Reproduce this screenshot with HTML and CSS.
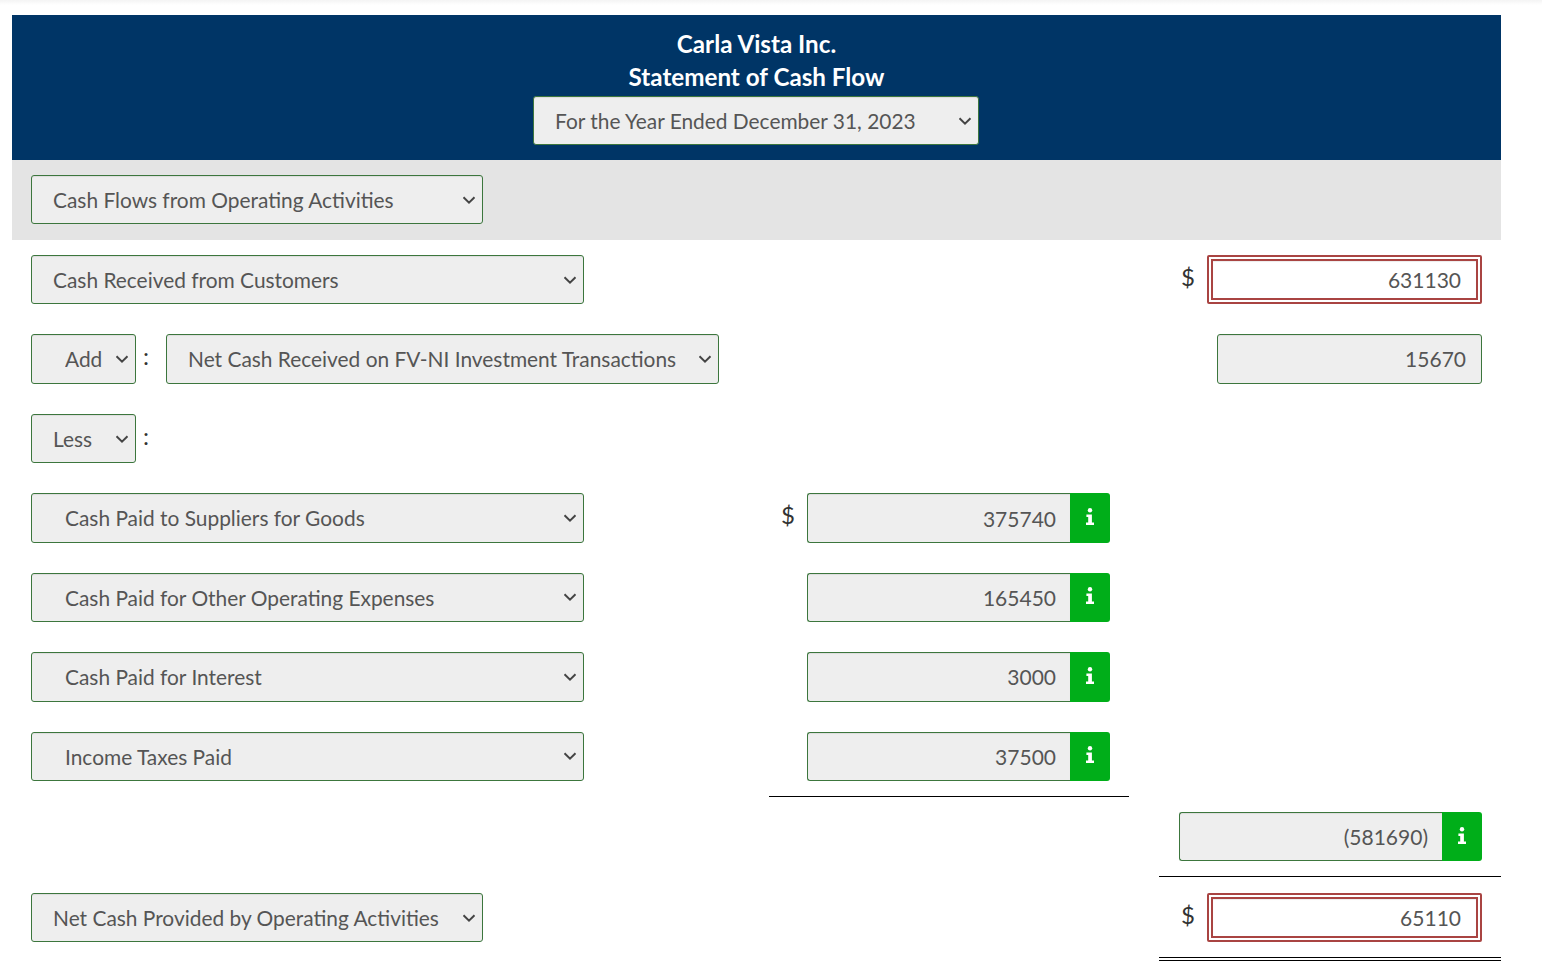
FILE: index.html
```html
<!DOCTYPE html>
<html lang="en">
<head>
<meta charset="utf-8">
<title>Statement of Cash Flow</title>
<link rel="stylesheet" href="styles.css">
</head>
<body>
<main class="sheet">
  <header class="head">
    <div class="title">Carla Vista Inc.</div>
    <div class="title">Statement of Cash Flow</div>
    <select class="sel sel-date"><option>For the Year Ended December 31, 2023</option></select>
  </header>

  <section class="band">
    <select class="sel sel-md"><option>Cash Flows from Operating Activities</option></select>
  </section>

  <div class="row">
    <div class="c-left"><select class="sel sel-lg"><option>Cash Received from Customers</option></select></div>
    <div class="c-mid"></div>
    <div class="c-right"><span class="cur">$</span>
      <div class="err"><input class="num num-err" readonly value="631130"></div></div>
  </div>

  <div class="row">
    <div class="c-left">
      <select class="sel sel-xs in-add"><option>Add</option></select><span class="colon">:</span>
      <select class="sel sel-net"><option>Net Cash Received on FV-NI Investment Transactions</option></select>
    </div>
    <div class="c-mid"></div>
    <div class="c-right"><input class="num num-plain" readonly value="15670"></div>
  </div>

  <div class="row">
    <div class="c-left"><select class="sel sel-xs"><option>Less</option></select><span class="colon">:</span></div>
    <div class="c-mid"></div>
    <div class="c-right"></div>
  </div>

  <div class="row">
    <div class="c-left"><select class="sel sel-lg in-wide"><option>Cash Paid to Suppliers for Goods</option></select></div>
    <div class="c-mid"><span class="cur">$</span>
      <div class="group g-mid"><input class="num" readonly value="375740"><span class="addon"><svg class="ico" viewBox="0 0 8 17"><circle cx="4" cy="2.2" r="2.2"/><path d="M.4 6.4H5.9V14.4H8V17H0V14.4H2.2V9H.4Z"/></svg></span></div></div>
    <div class="c-right"></div>
  </div>

  <div class="row">
    <div class="c-left"><select class="sel sel-lg in-wide"><option>Cash Paid for Other Operating Expenses</option></select></div>
    <div class="c-mid">
      <div class="group g-mid"><input class="num" readonly value="165450"><span class="addon"><svg class="ico" viewBox="0 0 8 17"><circle cx="4" cy="2.2" r="2.2"/><path d="M.4 6.4H5.9V14.4H8V17H0V14.4H2.2V9H.4Z"/></svg></span></div></div>
    <div class="c-right"></div>
  </div>

  <div class="row">
    <div class="c-left"><select class="sel sel-lg in-wide"><option>Cash Paid for Interest</option></select></div>
    <div class="c-mid">
      <div class="group g-mid"><input class="num" readonly value="3000"><span class="addon"><svg class="ico" viewBox="0 0 8 17"><circle cx="4" cy="2.2" r="2.2"/><path d="M.4 6.4H5.9V14.4H8V17H0V14.4H2.2V9H.4Z"/></svg></span></div></div>
    <div class="c-right"></div>
  </div>

  <div class="row row-ruled">
    <div class="c-left"><select class="sel sel-lg in-wide"><option>Income Taxes Paid</option></select></div>
    <div class="c-mid rule">
      <div class="group g-mid"><input class="num" readonly value="37500"><span class="addon"><svg class="ico" viewBox="0 0 8 17"><circle cx="4" cy="2.2" r="2.2"/><path d="M.4 6.4H5.9V14.4H8V17H0V14.4H2.2V9H.4Z"/></svg></span></div></div>
    <div class="c-right"></div>
  </div>

  <div class="row row-sub">
    <div class="c-left"></div>
    <div class="c-mid"></div>
    <div class="c-right rule">
      <div class="group g-right"><input class="num" readonly value="(581690)"><span class="addon"><svg class="ico" viewBox="0 0 8 17"><circle cx="4" cy="2.2" r="2.2"/><path d="M.4 6.4H5.9V14.4H8V17H0V14.4H2.2V9H.4Z"/></svg></span></div></div>
  </div>

  <div class="row row-total">
    <div class="c-left"><select class="sel sel-md"><option>Net Cash Provided by Operating Activities</option></select></div>
    <div class="c-mid"></div>
    <div class="c-right rule-double"><span class="cur">$</span>
      <div class="err"><input class="num num-err" readonly value="65110"></div></div>
  </div>
</main>
</body>
</html>
```

FILE: styles.css
```css
* { box-sizing: border-box; }

html, body { height: 100%; }

body {
  margin: 0;
  padding: 15px 41px 0 12px;
  background: linear-gradient(#f4f4f4, #fff 5px);
  font-family: Lato, "Liberation Sans", sans-serif;
  font-size: 21px;
  color: #555;
  overflow: hidden;
}

.head {
  height: 145px;
  padding-top: 12px;
  background: #003566;
  text-align: center;
}

.title {
  height: 33px;
  line-height: 33px;
  font-size: 24.2px;
  font-weight: 700;
  color: #fff;
}

.band {
  height: 80px;
  padding: 15px 19px;
  background: #e4e4e4;
}

.sel {
  appearance: none;
  height: 49.45px;
  padding: 0 30px 0.5px 21px;
  border: 1px solid #3c763d;
  border-radius: 3px;
  box-shadow: inset 0 1px 1px rgba(0, 0, 0, .075);
  background-color: #eee;
  background-image: url("data:image/svg+xml,%3Csvg xmlns='http://www.w3.org/2000/svg' viewBox='0 0 14 8'%3E%3Cpath d='M1.5 1.2L7 6.6l5.5-5.4' fill='none' stroke='%23444' stroke-width='2'/%3E%3C/svg%3E");
  background-repeat: no-repeat;
  background-position: right 6px center;
  background-size: 14px 8px;
  font: inherit;
  font-size: 20.9px;
  color: #555;
}

.sel-date { width: 446px; height: 49px; display: block; margin: 3px 0 0 521px; padding-bottom: 0; }
.sel-md { width: 452px; }
.sel-lg { width: 553px; }
.sel-xs { width: 105px; }
.sel-net { width: 553px; }
.in-wide, .in-add { padding-left: 33px; }

.row {
  display: grid;
  grid-template-columns: 757px 360px 30px 342px;
  height: 79.45px;
}

.row-ruled { height: 80.3px; }
.row-sub { height: 80px; }
.row-total { height: 84px; padding-top: 1px; }

.c-left {
  display: flex;
  align-items: flex-start;
  padding: 15px 0 0 19px;
}

.c-mid {
  grid-column: 2;
  display: flex;
  justify-content: flex-end;
  align-items: flex-start;
  padding: 15px 19px 0 0;
}

.c-right {
  grid-column: 4;
  display: flex;
  justify-content: flex-end;
  align-items: flex-start;
  padding: 15px 19px 0 0;
}

.colon { width: 30px; padding: 8px 0 0 7px; font-size: 24px; line-height: 28px; color: #333; }

.cur {
  margin-right: 12px;
  padding-top: 7px;
  font-size: 24px;
  line-height: 30px;
  color: #333;
}

.num {
  flex: 1;
  min-width: 0;
  height: 49.45px;
  padding: 0 14px 0 0;
  border: 1px solid #3c763d;
  border-right: 0;
  border-radius: 3px 0 0 3px;
  box-shadow: inset 0 1px 1px rgba(0, 0, 0, .075);
  background: #eee;
  font: inherit;
  color: #555;
  text-align: right;
  outline: none;
}

.num-plain {
  flex: none;
  width: 265px;
  padding: 0 15px 1px 0;
  border-right: 1px solid #3c763d;
  border-radius: 3px;
}

.err {
  width: 275px;
  height: 49.45px;
  padding: 2px;
  border: 2px solid #a94442;
  border-radius: 2px;
  display: flex;
}

.num-err {
  height: 100%;
  padding-right: 15px;
  border: 2px solid #a94442;
  border-radius: 0;
  background: #fff;
}

.group { display: flex; height: 49.45px; }
.g-mid { width: 303px; }
.g-right { width: 303px; }

.addon {
  width: 40px;
  flex: none;
  display: flex;
  align-items: center;
  justify-content: center;
  background: #00ae19;
  border-radius: 0 3px 3px 0;
}

.ico { width: 8px; height: 17px; margin-bottom: 3px; fill: #fff; }

.rule { border-bottom: 1px solid #000; }

.rule-double { border-bottom: 4px double #000; }
```
